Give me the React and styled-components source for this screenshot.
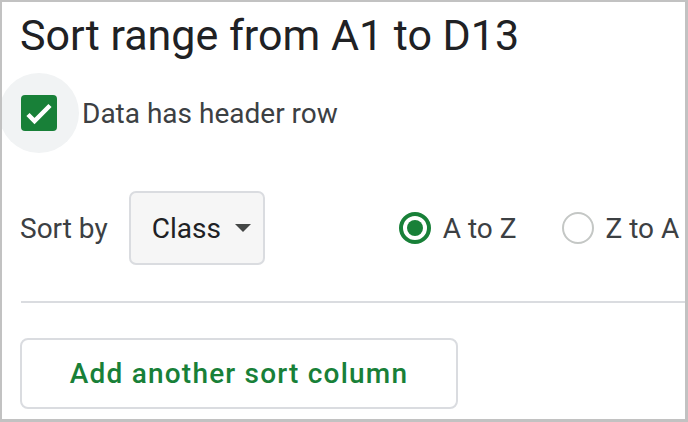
import React from "react";
import styled, { createGlobalStyle } from "styled-components";

const GREEN = "#188038";

const GlobalStyle = createGlobalStyle`
  html, body {
    margin: 0;
    padding: 0;
    background: #ffffff;
  }
  body {
    font-family: Roboto, "Liberation Sans", Arial, sans-serif;
  }
`;

const Frame = styled.div`
  width: 688px;
  height: 422px;
  box-sizing: border-box;
  border: 2px solid #c2c2c2;
  border-right-width: 3px;
  border-bottom-width: 3px;
  padding: 8px 0 0 18px;
  display: flex;
  flex-direction: column;
  overflow: hidden;
  background: #ffffff;
`;

const Title = styled.h1`
  margin: 0;
  font-size: 43px;
  line-height: 50px;
  font-weight: 400;
  color: #202124;
  white-space: nowrap;
`;

const CheckRow = styled.label`
  display: flex;
  align-items: center;
  gap: 3px;
  margin: 13px 0 0 -21px;
  height: 80px;
`;

const Halo = styled.span`
  width: 80px;
  height: 80px;
  border-radius: 50%;
  background: #f1f3f4;
  display: flex;
  align-items: center;
  justify-content: center;
  flex-shrink: 0;
`;

const Box = styled.span`
  width: 36px;
  height: 36px;
  border-radius: 4px;
  background: ${GREEN};
  display: flex;
  align-items: center;
  justify-content: center;
`;

const Label = styled.span`
  font-size: 28px;
  color: ${(p) => p.$color || "#3c4043"};
  white-space: nowrap;
`;

const SortRow = styled.div`
  display: flex;
  align-items: center;
  margin-top: 38px;
  height: 74px;
`;

const Select = styled.div`
  margin-left: 21px;
  width: 136px;
  height: 74px;
  box-sizing: border-box;
  border: 2px solid #dadce0;
  border-radius: 7px;
  background: #f6f6f6;
  display: flex;
  align-items: center;
  padding-left: 21px;
  gap: 14px;
`;

const Caret = styled.span`
  width: 0;
  height: 0;
  border-left: 8px solid transparent;
  border-right: 8px solid transparent;
  border-top: 8px solid #444746;
`;

const RadioGroup = styled.div`
  display: flex;
  align-items: center;
  gap: 45px;
  margin-left: 134px;
`;

const RadioOption = styled.label`
  display: flex;
  align-items: center;
  gap: 12px;
`;

const RadioCircle = styled.span`
  width: 32px;
  height: 32px;
  box-sizing: border-box;
  border-radius: 50%;
  border: ${(p) => (p.$checked ? `4px solid ${GREEN}` : "2px solid #c4c7c5")};
  display: flex;
  align-items: center;
  justify-content: center;

  &::after {
    content: "";
    display: ${(p) => (p.$checked ? "block" : "none")};
    width: 16px;
    height: 16px;
    border-radius: 50%;
    background: ${GREEN};
  }
`;

const Divider = styled.hr`
  margin: 36px 0 0 1px;
  border: none;
  height: 2px;
  background: #dadce0;
`;

const AddButton = styled.button`
  margin: 35px 0 0 0;
  width: 438px;
  height: 71px;
  box-sizing: border-box;
  border: 2px solid #dadce0;
  border-radius: 8px;
  background: #ffffff;
  color: ${GREEN};
  font-family: inherit;
  font-size: 28px;
  font-weight: 500;
  letter-spacing: 1.2px;
  cursor: pointer;
`;

const Radio = ({ checked, label }) => (
  <RadioOption>
    <RadioCircle $checked={checked} />
    <Label>{label}</Label>
  </RadioOption>
);

export default function App() {
  return (
    <>
      <GlobalStyle />
      <Frame>
        <Title>Sort range from A1 to D13</Title>
        <CheckRow>
          <Halo>
            <Box>
              <svg width="36" height="36" viewBox="0 0 36 36">
                <polyline
                  points="7,19.5 13.5,26 29,10.5"
                  fill="none"
                  stroke="#ffffff"
                  strokeWidth="4.5"
                />
              </svg>
            </Box>
          </Halo>
          <Label>Data has header row</Label>
        </CheckRow>
        <SortRow>
          <Label>Sort by</Label>
          <Select>
            <Label $color="#202124">Class</Label>
            <Caret />
          </Select>
          <RadioGroup>
            <Radio checked label="A to Z" />
            <Radio label="Z to A" />
          </RadioGroup>
        </SortRow>
        <Divider />
        <AddButton>Add another sort column</AddButton>
      </Frame>
    </>
  );
}
